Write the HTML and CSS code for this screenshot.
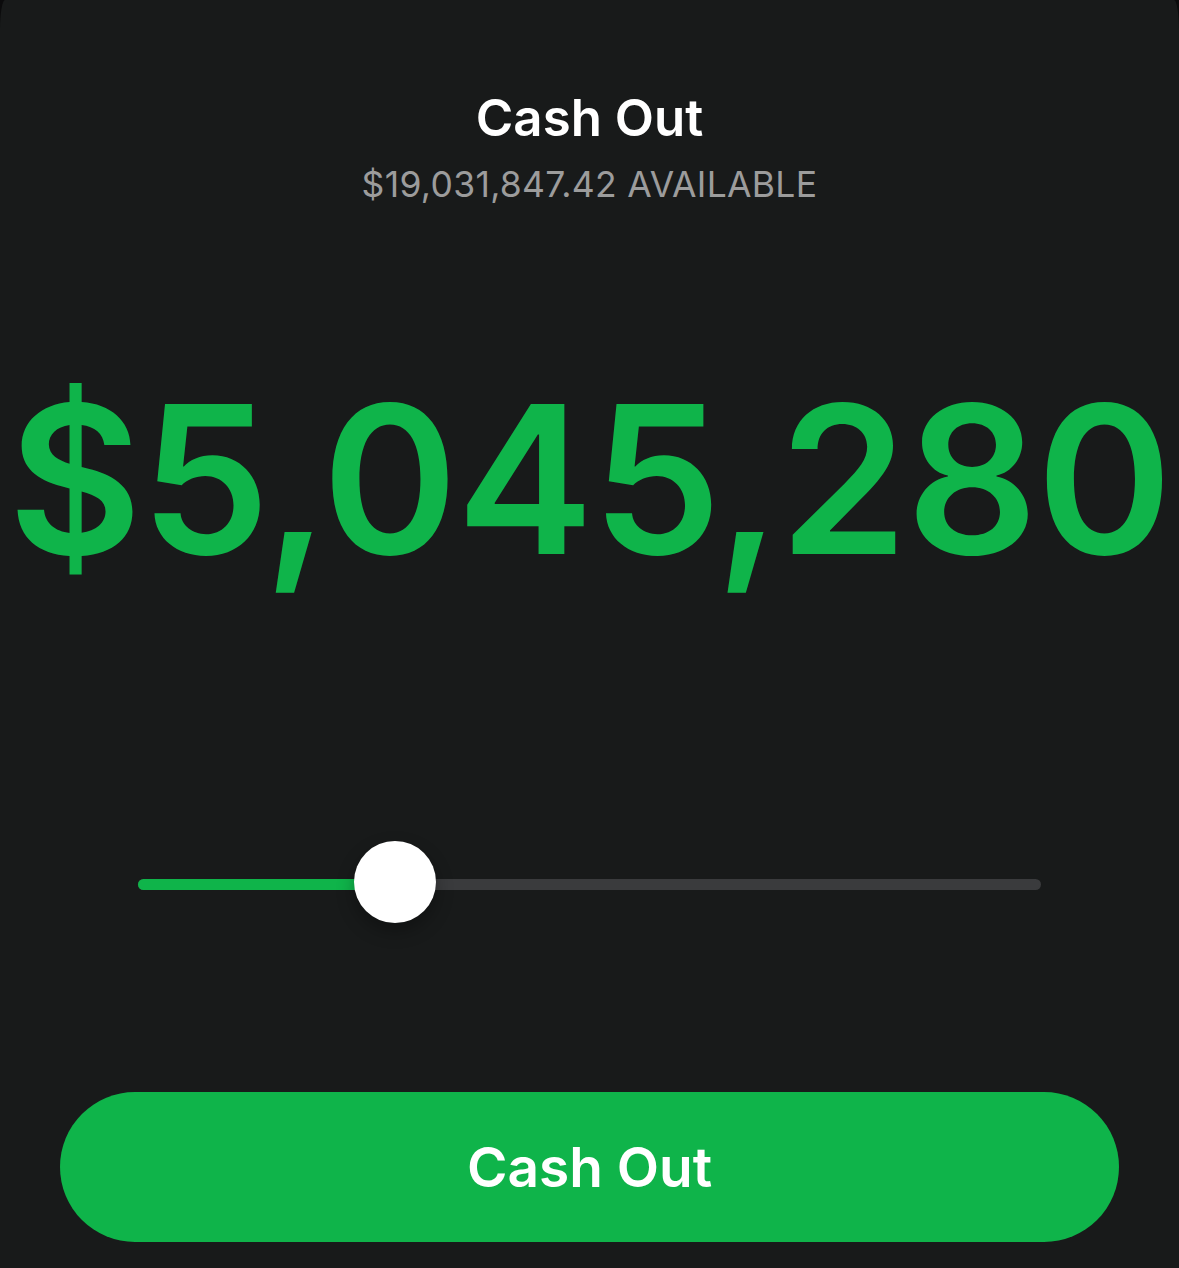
FILE: index.html
```html
<!DOCTYPE html>
<html lang="en">
<head>
  <meta charset="UTF-8" />
  <meta name="viewport" content="width=device-width, initial-scale=1.0" />
  <title>Cash Out</title>
  <link rel="stylesheet" href="styles.css">
</head>
<body>
  <div class="sheet">
    <header class="header">
      <h2 class="title">Cash Out</h2>
      <div class="available">$19,031,847.42 AVAILABLE</div>
    </header>

    <div class="amount">$5,045,280</div>

    <div class="slider">
      <div class="track">
        <div class="fill" style="width: 28.5%;"></div>
        <div class="thumb" style="left: 28.5%;"></div>
      </div>
    </div>

    <button class="submit-btn">Cash Out</button>
  </div>
</body>
</html>
```

FILE: styles.css
```css
* {
  box-sizing: border-box;
  font-family: 'Inter', 'Liberation Sans', sans-serif;
}
body {
  margin: 0;
  background: #0b0b0c;
}
.sheet {
  background: #181a1a;
  border-radius: 5px 5px 0 0 / 30px 30px 0 0;
  height: 1268px;
  display: flex;
  flex-direction: column;
  align-items: center;
  padding-top: 86px;
}
.header {
  text-align: center;
}
.title {
  margin: 0;
  color: #fff;
  font-size: 51px;
  font-weight: 600;
  line-height: 64px;
}
.available {
  margin-top: 13px;
  color: #9c9c9c;
  font-size: 35.5px;
  line-height: 44px;
  letter-spacing: 0.3px;
}
.amount {
  margin-top: 152px;
  color: #0fb44a;
  font-size: 206px;
  font-weight: 600;
  line-height: 240px;
  letter-spacing: -1.5px;
  white-space: nowrap;
}
.slider {
  margin-top: 280px;
  width: 903px;
}
.track {
  position: relative;
  height: 11px;
  border-radius: 6px;
  background: #3a3b3d;
}
.fill {
  height: 100%;
  border-radius: 6px;
  background: #0fb44a;
}
.thumb {
  position: absolute;
  top: 50%;
  width: 82px;
  height: 82px;
  margin: -44px 0 0 -41px;
  border-radius: 50%;
  background: #fff;
  box-shadow: 0 8px 18px rgba(0, 0, 0, 0.3);
}
button.submit-btn {
  margin-top: 202px;
  width: 1059px;
  height: 150px;
  border: none;
  border-radius: 75px;
  background: #0fb44a;
  color: #fff;
  font-size: 55px;
  font-weight: 600;
  cursor: pointer;
}
```
